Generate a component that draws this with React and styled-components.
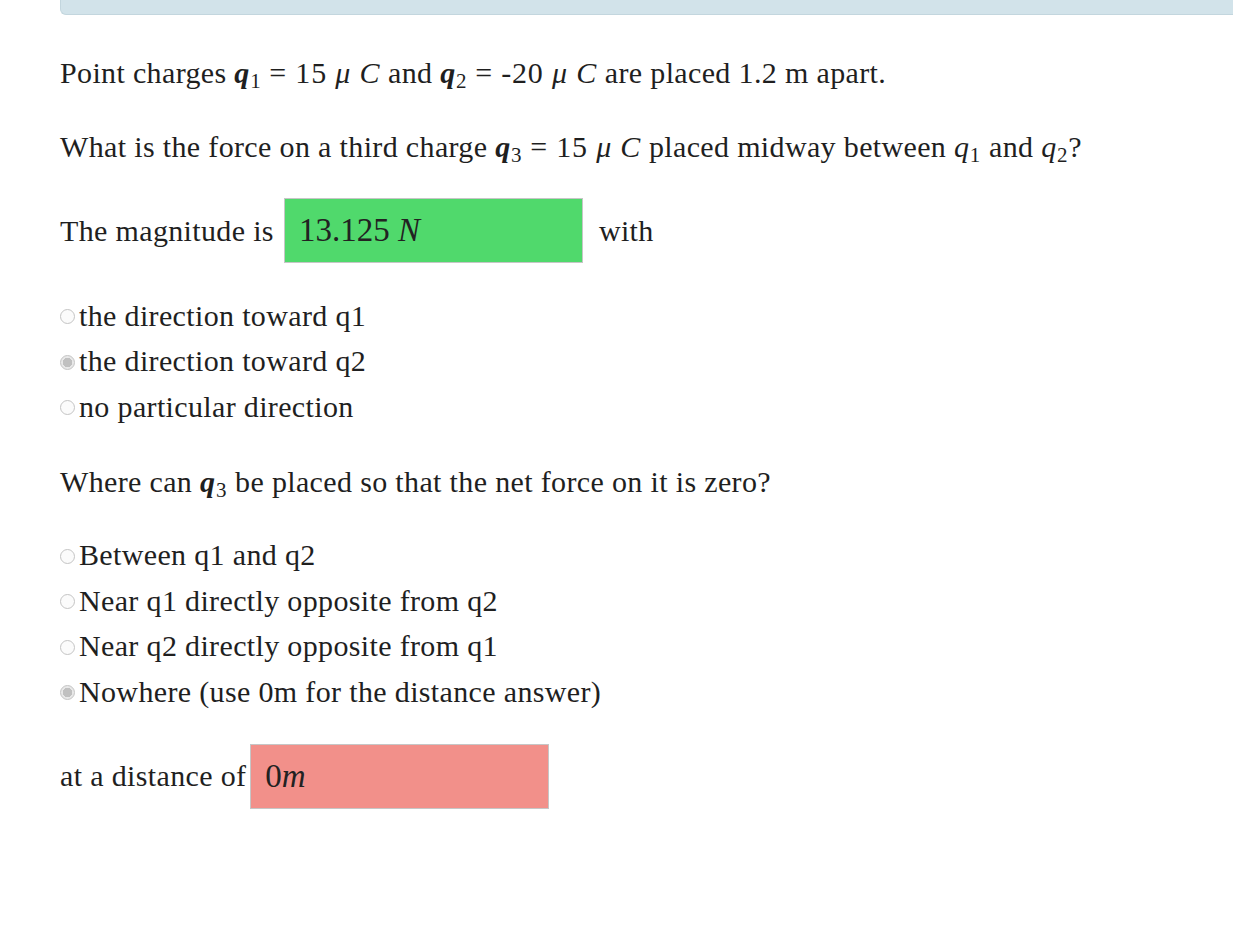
import React from 'react';
import styled, { createGlobalStyle } from 'styled-components';

const GlobalStyle = createGlobalStyle`
  html, body {
    margin: 0;
    padding: 0;
    background: #fff;
  }
  body {
    font-family: "Liberation Serif", "DejaVu Serif", serif;
    color: #1f1f1f;
  }
`;

const Page = styled.div`
  padding-left: 60px;
  min-height: 925px;
  box-sizing: border-box;
`;

const TopBar = styled.div`
  height: 15px;
  background: #d2e3ea;
  border-bottom: 1px solid #c3d6de;
  border-left: 1px solid #c3d6de;
  border-bottom-left-radius: 6px;
  box-sizing: border-box;
`;

const Body = styled.div`
  padding-top: 35px;
  font-size: 30px;
  letter-spacing: 0.35px;
`;

const Para = styled.p`
  margin: 0 0 29px;
  line-height: 45px;
  white-space: nowrap;
`;

const Math = styled.span`
  font-family: "Liberation Serif", serif;
  font-size: 30px;
  letter-spacing: 0.8px;
`;

const Var = styled.i`
  font-style: italic;
  font-weight: ${(p) => (p.$bold ? 700 : 400)};
`;

const Sub = styled.sub`
  font-size: 0.7em;
  vertical-align: -0.25em;
  line-height: 0;
`;

const AnswerRow = styled.div`
  display: flex;
  align-items: center;
  margin: 0 0 30px;
  height: 65px;
  white-space: nowrap;
`;

const Label = styled.span`
  margin-right: ${(p) => p.$gap}px;
`;

const AnswerBox = styled.div`
  width: 299px;
  height: 65px;
  flex: none;
  box-sizing: border-box;
  border: 1px solid #c6c6c6;
  background: ${(p) => (p.$correct ? '#50d96c' : '#f2908a')};
  display: flex;
  align-items: center;
  padding-left: 14px;
  font-size: 33px;
  letter-spacing: 0;
  color: #222;
`;

const After = styled.span`
  margin-left: 16px;
`;

const Options = styled.div`
  margin: 0 0 29px;
`;

const Option = styled.label`
  display: flex;
  align-items: center;
  gap: 4px;
  height: 45.5px;
  white-space: nowrap;
`;

const Radio = styled.span`
  width: 15px;
  height: 15px;
  flex: none;
  border-radius: 50%;
  box-sizing: border-box;
  border: 1px solid #c4c4c4;
  background: ${(p) =>
    p.$checked
      ? 'radial-gradient(circle, #c0c0c0 0 4.5px, #e8e8e8 5px)'
      : '#fbfbfb'};
  margin-top: 2px;
`;

const Q = ({ n, bold }) => (
  <Math>
    <Var $bold={bold}>q</Var>
    <Sub>{n}</Sub>
  </Math>
);

const charges = [
  'the direction toward q1',
  'the direction toward q2',
  'no particular direction',
];

const places = [
  'Between q1 and q2',
  'Near q1 directly opposite from q2',
  'Near q2 directly opposite from q1',
  'Nowhere (use 0m for the distance answer)',
];

export default function App() {
  return (
    <>
      <GlobalStyle />
      <Page>
        <TopBar />
        <Body>
          <Para>
            Point charges <Q n="1" bold /> <Math>= 15 <Var>μ C</Var></Math> and{' '}
            <Q n="2" bold /> <Math>= -20 <Var>μ C</Var></Math> are placed 1.2 m apart.
          </Para>
          <Para>
            What is the force on a third charge <Q n="3" bold />{' '}
            <Math>= 15 <Var>μ C</Var></Math> placed midway between <Q n="1" /> and{' '}
            <Q n="2" />?
          </Para>
          <AnswerRow>
            <Label $gap={10}>The magnitude is</Label>
            <AnswerBox $correct>
              13.125&nbsp;<Var>N</Var>
            </AnswerBox>
            <After>with</After>
          </AnswerRow>
          <Options>
            {charges.map((c, i) => (
              <Option key={c}>
                <Radio $checked={i === 1} />
                {c}
              </Option>
            ))}
          </Options>
          <Para>
            Where can <Q n="3" bold /> be placed so that the net force on it is zero?
          </Para>
          <Options>
            {places.map((c, i) => (
              <Option key={c}>
                <Radio $checked={i === 3} />
                {c}
              </Option>
            ))}
          </Options>
          <AnswerRow>
            <Label $gap={4}>at a distance of</Label>
            <AnswerBox>
              0<Var>m</Var>
            </AnswerBox>
          </AnswerRow>
        </Body>
      </Page>
    </>
  );
}
